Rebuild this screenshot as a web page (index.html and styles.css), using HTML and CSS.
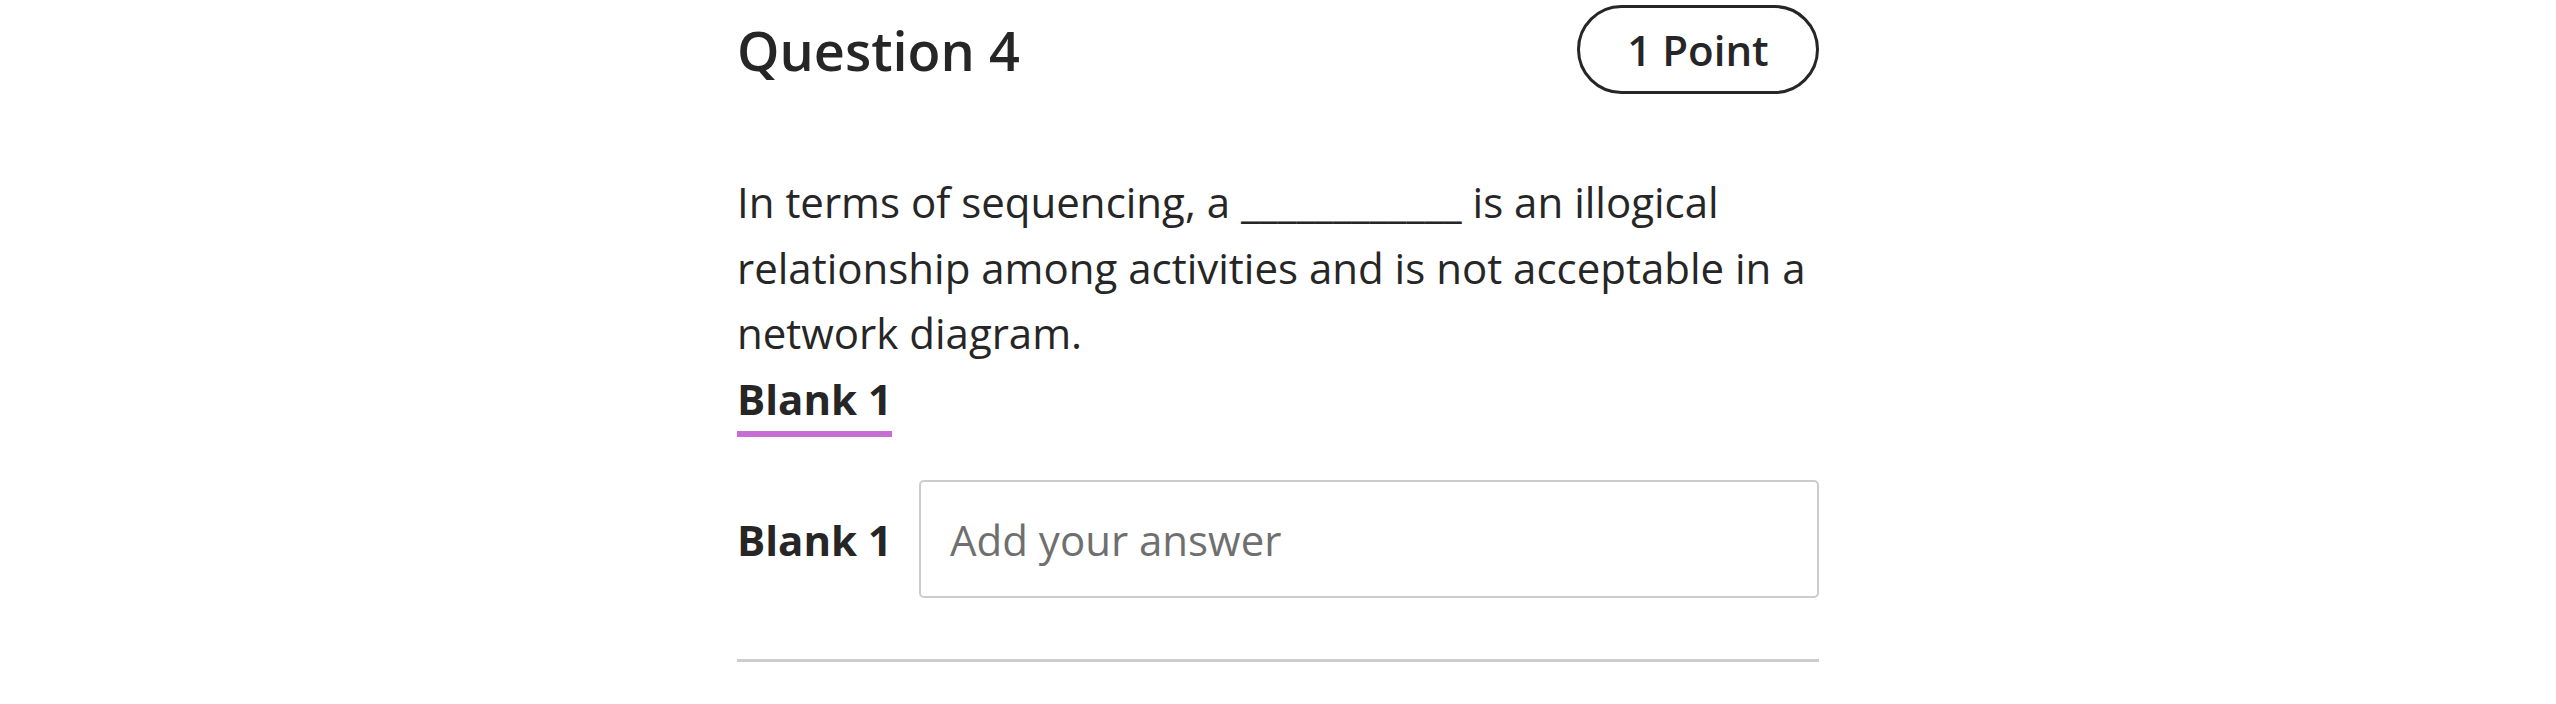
FILE: index.html
```html
<!DOCTYPE html>
<html lang="en">
<head>
<meta charset="utf-8">
<title>Question 4</title>
<link rel="stylesheet" href="styles.css">
</head>
<body>
<main class="question">
  <header class="question-header">
    <h2 class="question-title">Question 4</h2>
    <span class="points">1 Point</span>
  </header>
  <div class="question-body">
    <p class="question-text">In terms of sequencing, a ____________ is an illogical relationship among activities and is not acceptable in a network diagram.</p>
    <div class="blank-tab">Blank 1</div>
  </div>
  <div class="answer-row">
    <label class="answer-label" for="blank1">Blank 1</label>
    <input class="answer-input" id="blank1" type="text" placeholder="Add your answer">
  </div>
  <hr class="divider">
</main>
</body>
</html>
```

FILE: styles.css
```css
html, body {
  margin: 0;
  padding: 0;
  background: #ffffff;
}

body {
  font-family: "Open Sans", "Noto Sans", sans-serif;
  color: #262626;
}

.question {
  width: 1082px;
  margin: 0 auto;
}

.question-header {
  display: flex;
  justify-content: space-between;
  align-items: center;
  padding-top: 5px;
  height: 89px;
  box-sizing: content-box;
}

.question-title {
  margin: 0;
  font-size: 54px;
  font-weight: 600;
  line-height: normal;
  color: #262626;
}

.points {
  box-sizing: border-box;
  height: 89px;
  width: 242px;
  display: flex;
  align-items: center;
  justify-content: center;
  border: 3px solid #262626;
  border-radius: 45px;
  font-size: 42px;
  font-weight: 600;
  color: #262626;
}

.question-body {
  margin-top: 75px;
  font-size: 42px;
  line-height: 65.5px;
}

.question-text {
  margin: 0;
}

.blank-tab {
  display: inline-block;
  font-weight: 700;
  border-bottom: 6px solid #c86dd6;
  height: 65.5px;
  box-sizing: content-box;
}

.answer-row {
  display: flex;
  align-items: center;
  gap: 27px;
  margin-top: 43px;
}

.answer-label {
  font-size: 42px;
  font-weight: 700;
  color: #262626;
}

.answer-input {
  flex: 1;
  box-sizing: border-box;
  height: 118px;
  border: 2.5px solid #cccccc;
  border-radius: 5px;
  padding: 0 29px;
  font-family: "Open Sans", "Noto Sans", sans-serif;
  font-size: 42px;
  color: #262626;
  background: #ffffff;
  outline: none;
}

.answer-input::placeholder {
  color: #6f6f6f;
  opacity: 1;
}

.divider {
  margin: 61px 0 0 0;
  border: 0;
  height: 3px;
  background: #cdcdcd;
}
```
